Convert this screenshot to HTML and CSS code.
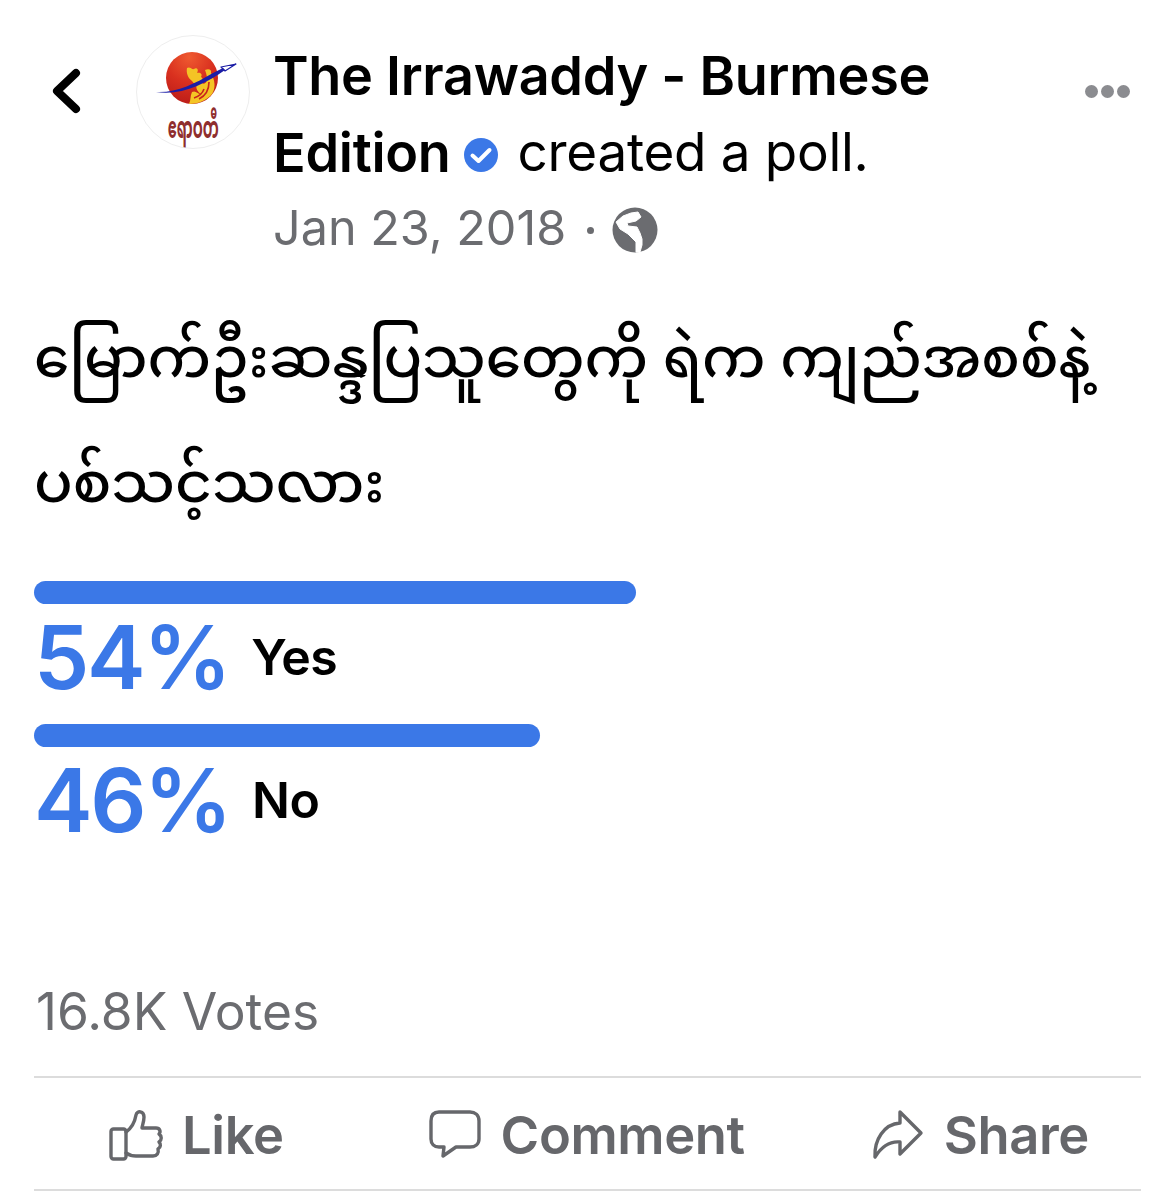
FILE: index.html
```html
<!DOCTYPE html>
<html lang="my">
<head>
<meta charset="utf-8">
<title>Poll</title>
<link rel="stylesheet" href="styles.css">
</head>
<body>
<main class="post">
  <header class="head">
    <svg class="back" width="30" height="46" viewBox="0 0 30 46"><path d="M24 5 L5 23 L24 41" fill="none" stroke="#000" stroke-width="8" stroke-linecap="round" stroke-linejoin="round"/></svg>
    <div class="avatar">
      <svg class="logo" width="112" height="76" viewBox="0 0 112 76">
        <defs>
          <radialGradient id="ball" cx="0.45" cy="0.1" r="0.95"><stop offset="0" stop-color="#ef5a30"/><stop offset="0.5" stop-color="#d9301f"/><stop offset="1" stop-color="#b91b18"/></radialGradient>
        </defs>
        <circle cx="55" cy="42" r="26" fill="url(#ball)"/>
        <path d="M50 32 C53 30 55 34 57 33 C60 31 62 34 60 37 C63 36 66 38 64 41 C66 42 67 46 65 49 C60 50 57 48 55 45 C51 42 49 37 50 32Z" fill="#f4c425"/>
        <path d="M68 34 C72 32 75 34 74 37 C78 44 79 52 75 58 C70 64 62 68 52 68 C54 64 53 60 55 56 C59 54 60 58 64 58 C58 54 58 48 63 47 C70 50 72 44 68 34Z" fill="#f4c425"/>
        <path d="M62 63 C68 60 72 54 72 46 M57 62 C63 60 66 56 67 53" fill="none" stroke="#c9241c" stroke-width="1.6"/>
        <path d="M19 56 C40 57 57 48 76 37 L86 32 L88 34 C68 48 44 60 19 56Z" fill="#1b1da6"/>
        <path d="M84 31 L99 28 L88 35Z" fill="none" stroke="#1b1da6" stroke-width="1.2" stroke-linejoin="round"/>
      </svg>
      <span class="logo-text">ဧရာဝတီ</span>
    </div>
    <div class="title">
      <h1 class="title-line"><b>The Irrawaddy - Burmese</b></h1>
      <p class="title-line"><b>Edition</b><svg class="badge" width="34" height="34" viewBox="0 0 34 34"><circle cx="17" cy="17" r="17" fill="#3b78e7"/><path d="M8.5 17.5 L14.5 23 L25.5 12" fill="none" stroke="#fff" stroke-width="4" stroke-linecap="round" stroke-linejoin="round"/></svg><span class="created">created a poll.</span></p>
      <p class="date"><span>Jan 23, 2018</span><i class="sep"></i><svg class="globe" width="46" height="46" viewBox="0 0 46 46"><circle cx="23" cy="23" r="22.5" fill="#6b6c70"/><path d="M26 5 L29 10 L24 14 L15 16 L16 19 L25 20 L28 26 L30 32 L30 38 L28 45 L24 45 L24 35 L16 27 L8 22 L4 15 L11 9 L19 6Z" fill="#fff" stroke="#fff" stroke-linejoin="round"/></svg></p>
    </div>
    <div class="more" aria-label="More"><i></i><i></i><i></i></div>
  </header>

  <p class="question">မြောက်ဦးဆန္ဒပြသူတွေကို ရဲက ကျည်အစစ်နဲ့<br>ပစ်သင့်သလား</p>

  <section class="poll">
    <div class="option">
      <div class="bar bar-yes"></div>
      <div class="result"><span class="pct">54%</span><span class="label">Yes</span></div>
    </div>
    <div class="option">
      <div class="bar bar-no"></div>
      <div class="result"><span class="pct">46%</span><span class="label">No</span></div>
    </div>
  </section>

  <p class="votes">16.8K Votes</p>

  <nav class="actions">
    <div class="action action-like">
      <svg width="54" height="52" viewBox="0 0 54 52" fill="none" stroke="#66676b" stroke-width="3.4" stroke-linejoin="round" stroke-linecap="round"><rect x="2" y="20" width="15" height="30" rx="2.5"/><path d="M17 23 C24 18 26 12 27 6 C28 1 35 2 35 8 C35 13 33 17 33 19 L47 19 C51 19 52 23 50 25 C53 27 53 31 50 33 C52 35 52 38 49 40 C50 44 48 47 44 47 L27 47 C22 47 20 46 17 44"/></svg>
      <span>Like</span>
    </div>
    <div class="action action-comment">
      <svg width="52" height="50" viewBox="0 0 52 50" fill="none" stroke="#66676b" stroke-width="3.4" stroke-linejoin="round"><path d="M10 2 L41 2 C46 2 50 5 50 11 L50 29 C50 34 46 37 41 37 L27 37 L14 46 L15 37 L10 37 C5 37 2 34 2 29 L2 11 C2 5 5 2 10 2Z"/></svg>
      <span>Comment</span>
    </div>
    <div class="action action-share">
      <svg width="52" height="50" viewBox="0 0 52 50" fill="none" stroke="#66676b" stroke-width="3.4" stroke-linejoin="round" stroke-linecap="round"><path d="M28 2 L49 23 L28 44 L28 32 C18 31 10 36 3 47 C2 30 12 14 28 13Z"/></svg>
      <span>Share</span>
    </div>
  </nav>
</main>
</body>
</html>
```

FILE: styles.css
```css
* { box-sizing: border-box; }
html, body { margin: 0; padding: 0; background: #fff; }
body { width: 1176px; height: 1200px; overflow: hidden; font-family: Inter, "Noto Sans", "Noto Sans Myanmar", "Liberation Sans", sans-serif; color: #000; }
.post { padding: 37px 35px 0 34px; }

.head { display: flex; align-items: flex-start; height: 234px; }
.back { margin: 31px 0 0 18px; flex: none; }
.avatar { flex: none; width: 114px; height: 114px; margin: -2px 0 0 54px; border: 1px solid #eee; border-radius: 50%; display: flex; flex-direction: column; align-items: center; overflow: hidden; }
.logo { flex: none; }
.logo-text { font-size: 30px; line-height: 30px; font-weight: 700; color: #8f2e2e; margin-top: 0; transform: scaleX(0.48); white-space: nowrap; }
.title { flex: 1; margin: 0 0 0 23px; }
.title-line { margin: 0; height: 77px; font-size: 54px; line-height: 77px; font-weight: 400; letter-spacing: -0.3px; white-space: nowrap; display: flex; align-items: center; }
.title-line b { font-weight: 600; }
.badge { margin: 4px 0 0 13px; flex: none; }
.created { margin-left: 20px; font-size: 53px; }
.date { margin: 0; height: 74px; font-size: 48.5px; line-height: 74px; color: #6b6c70; display: flex; align-items: center; white-space: nowrap; }
.sep { width: 7px; height: 7px; border-radius: 50%; background: #6b6c70; margin: 4px 0 0 21px; flex: none; }
.globe { margin: 4px 0 0 18px; flex: none; }
.more { display: flex; gap: 3px; margin: 48px 11px 0 0; flex: none; }
.more i { width: 13px; height: 13px; border-radius: 50%; background: #8b8c90; display: block; }

.question { margin: 31px 0 0 0; font-family: "Noto Sans Myanmar", "Padauk", "Noto Sans", sans-serif; font-size: 56.7px; font-weight: 500; line-height: 125px; white-space: nowrap; color: #000; }

.poll { margin-top: 29px; display: flex; flex-direction: column; gap: 15px; }
.bar { height: 23px; border-radius: 12px; background: #3b78e7; }
.bar-yes { width: 602px; }
.bar-no { width: 506px; }
.result { display: flex; align-items: center; height: 105px; }
.pct { font-size: 88px; line-height: 90px; color: #3b78e7; font-weight: 600; letter-spacing: -2.4px; }
.label { font-size: 50px; font-weight: 600; margin-left: 22px; letter-spacing: -0.6px; }

.votes { margin: 129px 0 0 2px; font-size: 51.5px; line-height: 60px; color: #6b6c70; }

.actions { margin-top: 35px; height: 115px; padding-top: 2px; border-top: 2px solid #dcdcdc; border-bottom: 2px solid #dcdcdc; display: flex; align-items: center; width: 1107px; }
.action { display: flex; align-items: center; color: #66676b; font-size: 52.5px; font-weight: 600; letter-spacing: -0.4px; flex: none; }
.action svg { flex: none; }
.action-like { margin-left: 75px; gap: 19px; }
.action-comment { margin-left: 145px; gap: 20px; }
.action-share { margin-left: 127px; gap: 20px; }
```
